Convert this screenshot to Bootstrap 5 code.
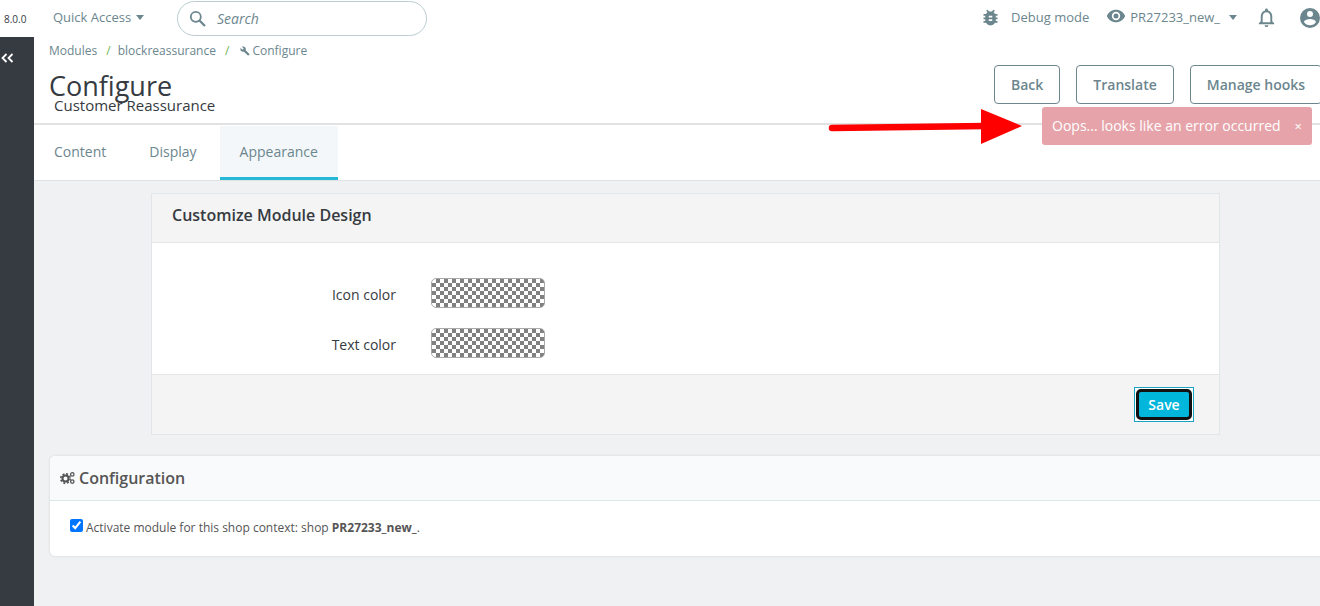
<!DOCTYPE html>
<html lang="en">
<head>
<meta charset="utf-8">
<title>Configure</title>
<link href="https://cdn.jsdelivr.net/npm/bootstrap@5.3.0/dist/css/bootstrap.min.css" rel="stylesheet">
<style>
html,body{height:606px;overflow:hidden}
body{font-family:"Open Sans",sans-serif;font-size:14px;color:#363a41;background:#fff;position:relative}
.topbar{height:37px;background:#fff}
.ver{width:34px;font-size:10px;padding-left:4px;color:#363a41;margin-top:1px}
.quick{margin-left:19px;font-size:13px;color:#6c868e;width:124px;margin-top:-1px}
.caret-d{display:inline-block;width:0;height:0;border-left:4.5px solid transparent;border-right:4.5px solid transparent;border-top:5px solid #6c868e;margin-left:5px;vertical-align:2px}
.searchbox{width:250px;height:35px;border:1px solid #bbcdd2;border-radius:18px;padding-left:11px;color:#6c868e}
.searchbox em{font-size:14px;margin-left:11px}
.topr{margin-left:auto;color:#6c868e;font-size:13px;margin-top:-2px}
.topr svg{display:block;flex:none}
.debug{margin-right:17px;gap:10px}
.shop{margin-right:18px;gap:4px}
.shop svg{margin-top:-4px}
.bell{margin-right:20px}
.avatarbox{margin-right:-2px}
.railbar{width:34px;height:569px;background:#363a41;color:#fff;padding:16px 0 0 0}
.chev{display:block;margin-left:1px}
.mainwrap{width:1286px;height:569px;background:#eff1f2;position:relative}
.headarea{height:88px;background:#fff;border-bottom:2px solid #e2e2e2;padding:5px 0 0 15px}
.crumbs{font-size:12px;color:#6c868e;line-height:17px;height:17px}
.crumbs i{font-style:normal;color:#70b54f;margin:0 7px 0 6px}
.crumbs .cfg{margin-left:4px}
.crumbs svg{vertical-align:-1px;margin-right:2px}
.ttl{font-size:27px;line-height:34px;color:#363a41;margin:10px 0 0 0;font-weight:400}
.subttl{font-size:15px;line-height:20px;color:#363a41;margin:-8px 0 0 5px}
.headbtns{position:absolute;top:28px;left:960px;gap:16px;white-space:nowrap}
.hbtn{height:39px;border:1px solid #6c868e;border-radius:4px;color:#6c868e;font-size:14px;font-weight:600;padding:0 16px;line-height:37px;background:#fff}
.tabrow{height:56px;background:#fff;border-top:1px solid #fff;border-bottom:1px solid #dfe3e4}
.tabitem{padding:0 20px;color:#6c868e;font-size:14px;line-height:52px;height:54px;margin-right:3px}
.tabitem.on{background:#f3f7fa;border-bottom:3px solid #25b9d7;margin:0}
.designpanel{width:1069px;margin:12px 0 0 117px;border:1px solid #e1e6e8;background:#fff}
.dphead{height:49px;background:#f4f4f4;border-bottom:1px solid #e6e6e6;padding:10px 20px 0;font-size:16px;font-weight:600;line-height:22px;color:#363a41}
.dpbody{height:132px;padding-top:35px;border-bottom:1px solid #e6e6e6}
.colrow{height:30px;margin-bottom:20px}
.collabel{width:244px;text-align:right;font-size:14px;line-height:34px;color:#363a41}
.swatch{width:114px;height:30px;margin-left:35px;border:1px solid #aaa;border-radius:5px;
 background-color:#fff;background-image:repeating-conic-gradient(#808080 0 25%,#fff 0 50%);background-size:8px 8px}
.dpfoot{height:59px;background:#f4f4f4;padding:12px 25px 0 0}
.savering{display:block;width:60px;height:35px;padding:1px;border:1px solid #1ba3c2;background:#fff}
.savebtn{display:block;width:100%;height:100%;background:#00b6db;color:#fff;font-size:14px;font-weight:600;border:3px solid #111;border-radius:5px;line-height:25px;padding:0;text-align:center}
.confpanel{width:1290px;height:100px;margin:21px 0 0 16px;background:#fff;border-radius:5px;box-shadow:0 0 3px rgba(0,0,0,.12);overflow:hidden}
.cfhead{height:45px;background:#f9fafc;border-bottom:1px solid #dbe6e9;padding:0 0 0 10px;font-size:16px;font-weight:600;line-height:24px;color:#555;gap:4px}
.cfbody{padding:17px 0 0 20px;font-size:12px;color:#555;line-height:20px}
.cfbody input{width:13px;height:13px;margin:0 3px 0 0;vertical-align:0}
.oops{position:absolute;left:1042px;top:107px;width:270px;height:38px;background:#e6a4aa;border-radius:3px;color:#fff;font-size:14px;line-height:38px;padding:0 10px}
.oops b{font-weight:400;font-size:13px;position:absolute;right:10px}
.arrowmark{position:absolute;left:826px;top:107px}
</style>
</head>
<body>
<div class="topbar d-flex align-items-center">
  <div class="ver">8.0.0</div>
  <div class="quick">Quick Access<span class="caret-d"></span></div>
  <div class="searchbox d-flex align-items-center">
    <svg width="17" height="17" viewBox="0 0 17 17" fill="none" stroke="#6c868e" stroke-width="1.8"><circle cx="6.800" cy="6.800" r="5"/><path d="M10.500 10.500 16 16" stroke-width="2.200"/></svg>
    <em>Search</em>
  </div>
  <div class="topr d-flex align-items-center">
    <div class="debug d-flex align-items-center">
      <svg width="21" height="21" viewBox="0 0 24 24" fill="#6c868e"><path d="M20 8h-2.800c-.5-.8-1.100-1.500-1.800-2L17 4.400 15.600 3l-2.200 2.200a6 6 0 0 0-2.800 0L8.400 3 7 4.400 8.600 6c-.7.500-1.300 1.200-1.800 2H4v2h2.100c-.1.300-.1.700-.1 1v1H4v2h2v1c0 .3 0 .7.100 1H4v2h2.800a6 6 0 0 0 10.400 0H20v-2h-2.100c.1-.3.100-.7.100-1v-1h2v-2h-2v-1c0-.3 0-.7-.1-1H20V8zm-6 8h-4v-2h4v2zm0-4h-4v-2h4v2z"/></svg>
      <span>Debug mode</span>
    </div>
    <div class="shop d-flex align-items-center">
      <svg width="20" height="20" viewBox="0 0 24 24" fill="#6c868e"><path d="M12 4.500C7 4.500 2.700 7.600 1 12c1.700 4.400 6 7.500 11 7.500s9.300-3.100 11-7.500c-1.700-4.400-6-7.500-11-7.500zM12 17a5 5 0 1 1 0-10 5 5 0 0 1 0 10zm0-8a3 3 0 1 0 0 6 3 3 0 0 0 0-6z"/></svg>
      <span>PR27233_new_</span><span class="caret-d"></span>
    </div>
    <div class="bell">
      <svg width="23" height="23" viewBox="0 0 24 24" fill="#6c868e"><path d="M12 22a2 2 0 0 0 2-2h-4a2 2 0 0 0 2 2zm6-6v-5c0-3.100-1.600-5.600-4.500-6.300V4a1.500 1.500 0 0 0-3 0v.7C7.600 5.400 6 7.900 6 11v5l-2 2v1h16v-1l-2-2zm-2 1H8v-6c0-2.500 1.500-4.500 4-4.500s4 2 4 4.500v6z"/></svg>
    </div>
    <div class="avatarbox">
      <svg width="24" height="24" viewBox="0 0 24 24" fill="#6c868e"><path d="M12 2a10 10 0 1 0 0 20 10 10 0 0 0 0-20zm0 3a3 3 0 1 1 0 6 3 3 0 0 1 0-6zm0 14.200a7.200 7.200 0 0 1-6-3.220c.03-2 4-3.080 6-3.080s5.970 1.100 6 3.080a7.200 7.200 0 0 1-6 3.220z"/></svg>
    </div>
  </div>
</div>
<div class="d-flex">
  <div class="railbar">
    <svg class="chev" width="13" height="10" viewBox="0 0 13 10" fill="none" stroke="#fff" stroke-width="1.800"><path d="M5.500 1 1.500 5l4 4M11.500 1l-4 4 4 4"/></svg>
  </div>
  <div class="mainwrap">
    <div class="headarea">
      <div class="crumbs">Modules <i>/</i>blockreassurance <i>/</i><span class="cfg"><svg width="10" height="10" viewBox="0 0 24 24" fill="#6c868e"><path d="M22.700 19 13.600 9.900c.9-2.300.4-5-1.500-6.900-2-2-5-2.400-7.400-1.300L9 6 6 9 1.600 4.700C.4 7.100.9 10.100 2.900 12.100c1.900 1.900 4.600 2.400 6.900 1.500l9.100 9.100c.4.400 1 .4 1.400 0l2.300-2.300c.5-.4.500-1.100.1-1.400z"/></svg>Configure</span></div>
      <h1 class="ttl">Configure</h1>
      <div class="subttl">Customer Reassurance</div>
      <div class="headbtns d-flex">
        <a class="hbtn text-decoration-none">Back</a>
        <a class="hbtn text-decoration-none">Translate</a>
        <a class="hbtn text-decoration-none">Manage hooks</a>
      </div>
    </div>
    <div class="tabrow d-flex">
      <div class="tabitem">Content</div>
      <div class="tabitem">Display</div>
      <div class="tabitem on">Appearance</div>
    </div>
    <div class="designpanel">
      <div class="dphead">Customize Module Design</div>
      <div class="dpbody">
        <div class="colrow d-flex"><div class="collabel">Icon color</div><div class="swatch"></div></div>
        <div class="colrow d-flex"><div class="collabel">Text color</div><div class="swatch"></div></div>
      </div>
      <div class="dpfoot d-flex justify-content-end"><span class="savering"><button class="savebtn">Save</button></span></div>
    </div>
    <div class="confpanel">
      <div class="cfhead d-flex align-items-center">
        <svg width="15" height="14" viewBox="0 0 15 14" fill="none" stroke="#555"><circle cx="5.500" cy="7.500" r="3" stroke-width="2"/><circle cx="5.500" cy="7.500" r="4.700" stroke-width="1.600" stroke-dasharray="2 1.700"/><circle cx="12.300" cy="3.400" r="1.700" stroke-width="1.300"/><circle cx="12.300" cy="10.600" r="1.700" stroke-width="1.300"/></svg>
        <span>Configuration</span>
      </div>
      <div class="cfbody"><input type="checkbox" checked>Activate module for this shop context: shop <strong>PR27233_new_</strong>.</div>
    </div>
  </div>
</div>
<div class="oops">Oops... looks like an error occurred<b>×</b></div>
<svg class="arrowmark" width="198" height="38" viewBox="0 0 198 38"><path d="M6 21 160 19" stroke="#f00" stroke-width="6.500" stroke-linecap="round"/><path d="M155 2v35l41-18z" fill="#f00"/></svg>
</body>
</html>
